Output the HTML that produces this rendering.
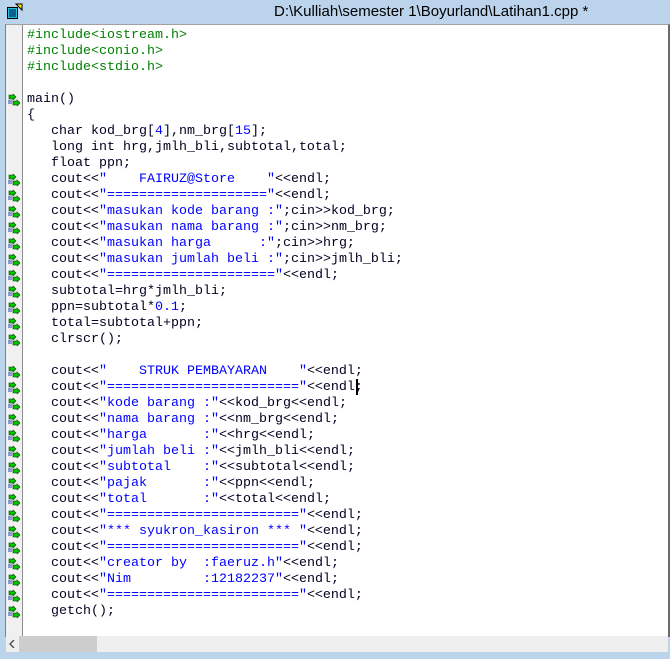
<!DOCTYPE html>
<html><head><style>
body{margin:0;width:670px;height:659px;background:#bcd3ec;position:relative;overflow:hidden;font-family:"Liberation Sans",sans-serif}
#title{position:absolute;left:274px;top:3px;font-size:15px;color:#000}
#ed{position:absolute;left:5px;top:24px;width:662px;height:612px;background:#fff;border-top:1px solid #a0a0a0;border-left:1px solid #808080;border-right:2px solid #6a6a6a}
#gut{position:absolute;left:0;top:0;width:16px;height:612px;background:#f0f0f0;border-right:1px solid #8c8c8c}
#code{position:absolute;left:21px;top:3px;font-family:"Liberation Mono",monospace;font-size:13.33px;line-height:16px;white-space:pre;color:#000020}
.s{color:#0000ff}.g{color:#008000}
.ar{position:absolute;left:2px;width:14px;height:12px}
#sb{position:absolute;left:6px;top:636px;width:662px;height:16px;background:#efefef}
#th{position:absolute;left:13px;top:0;width:78px;height:16px;background:#cdcdcd}
#cur{position:absolute;width:2px;height:16px;background:#000}
</style></head><body>
<svg style="position:absolute;left:6px;top:3px" width="18" height="18" viewBox="0 0 18 18"><path d="M10 1l6 0 0 6z" fill="#ffee00" stroke="#000" stroke-width="1"/><rect x="1.5" y="4.5" width="10" height="11" fill="#20c0e0" stroke="#000"/><path d="M3 7h7M3 9h7M3 11h7M3 13h7" stroke="#003" stroke-width="1"/></svg>
<div id="title">D:\Kulliah\semester 1\Boyurland\Latihan1.cpp *</div>
<div id="ed">
<div id="gut"></div>
<div id="code"><span class="g">#include&lt;iostream.h&gt;</span>
<span class="g">#include&lt;conio.h&gt;</span>
<span class="g">#include&lt;stdio.h&gt;</span>

main()
{
   char kod_brg[<span class="s">4</span>],nm_brg[<span class="s">15</span>];
   long int hrg,jmlh_bli,subtotal,total;
   float ppn;
   cout&lt;&lt;<span class="s">"    FAIRUZ@Store    "</span>&lt;&lt;endl;
   cout&lt;&lt;<span class="s">"===================="</span>&lt;&lt;endl;
   cout&lt;&lt;<span class="s">"masukan kode barang :"</span>;cin&gt;&gt;kod_brg;
   cout&lt;&lt;<span class="s">"masukan nama barang :"</span>;cin&gt;&gt;nm_brg;
   cout&lt;&lt;<span class="s">"masukan harga      :"</span>;cin&gt;&gt;hrg;
   cout&lt;&lt;<span class="s">"masukan jumlah beli :"</span>;cin&gt;&gt;jmlh_bli;
   cout&lt;&lt;<span class="s">"====================="</span>&lt;&lt;endl;
   subtotal=hrg*jmlh_bli;
   ppn=subtotal*<span class="s">0.1</span>;
   total=subtotal+ppn;
   clrscr();

   cout&lt;&lt;<span class="s">"    STRUK PEMBAYARAN    "</span>&lt;&lt;endl;
   cout&lt;&lt;<span class="s">"========================"</span>&lt;&lt;endl;
   cout&lt;&lt;<span class="s">"kode barang :"</span>&lt;&lt;kod_brg&lt;&lt;endl;
   cout&lt;&lt;<span class="s">"nama barang :"</span>&lt;&lt;nm_brg&lt;&lt;endl;
   cout&lt;&lt;<span class="s">"harga       :"</span>&lt;&lt;hrg&lt;&lt;endl;
   cout&lt;&lt;<span class="s">"jumlah beli :"</span>&lt;&lt;jmlh_bli&lt;&lt;endl;
   cout&lt;&lt;<span class="s">"subtotal    :"</span>&lt;&lt;subtotal&lt;&lt;endl;
   cout&lt;&lt;<span class="s">"pajak       :"</span>&lt;&lt;ppn&lt;&lt;endl;
   cout&lt;&lt;<span class="s">"total       :"</span>&lt;&lt;total&lt;&lt;endl;
   cout&lt;&lt;<span class="s">"========================"</span>&lt;&lt;endl;
   cout&lt;&lt;<span class="s">"*** syukron_kasiron *** "</span>&lt;&lt;endl;
   cout&lt;&lt;<span class="s">"========================"</span>&lt;&lt;endl;
   cout&lt;&lt;<span class="s">"creator by  :faeruz.h"</span>&lt;&lt;endl;
   cout&lt;&lt;<span class="s">"Nim         :12182237"</span>&lt;&lt;endl;
   cout&lt;&lt;<span class="s">"========================"</span>&lt;&lt;endl;
   getch();</div>
<div id="cur" style="left:350px;top:354px"></div>
<div id="arrows"></div>
</div>
<div id="sb"><svg style="position:absolute;left:3px;top:4px" width="6" height="8"><path d="M5 0L1 4 5 8" stroke="#555" stroke-width="1.5" fill="none"/></svg><div id="th"></div></div>
<script>
var a=document.getElementById('arrows'),L=[5,10,11,12,13,14,15,16,17,18,19,20,22,23,24,25,26,27,28,29,30,31,32,33,34,35,36,37];
L.forEach(function(n){a.innerHTML+='<svg class="ar" style="top:'+((n-1)*16+5)+'px" viewBox="0 0 14 12"><path d="M1 1h4V0l3 3-3 3V5H1z" fill="#00c000" stroke="#004000" stroke-width=".6"/><path d="M5 7h4V6l3 3-3 3v-1H5z" fill="#00c000" stroke="#004000" stroke-width=".6"/><path d="M0 7h4M0 9h4" stroke="#2040c0"/></svg>';});
</script>
</body></html>
